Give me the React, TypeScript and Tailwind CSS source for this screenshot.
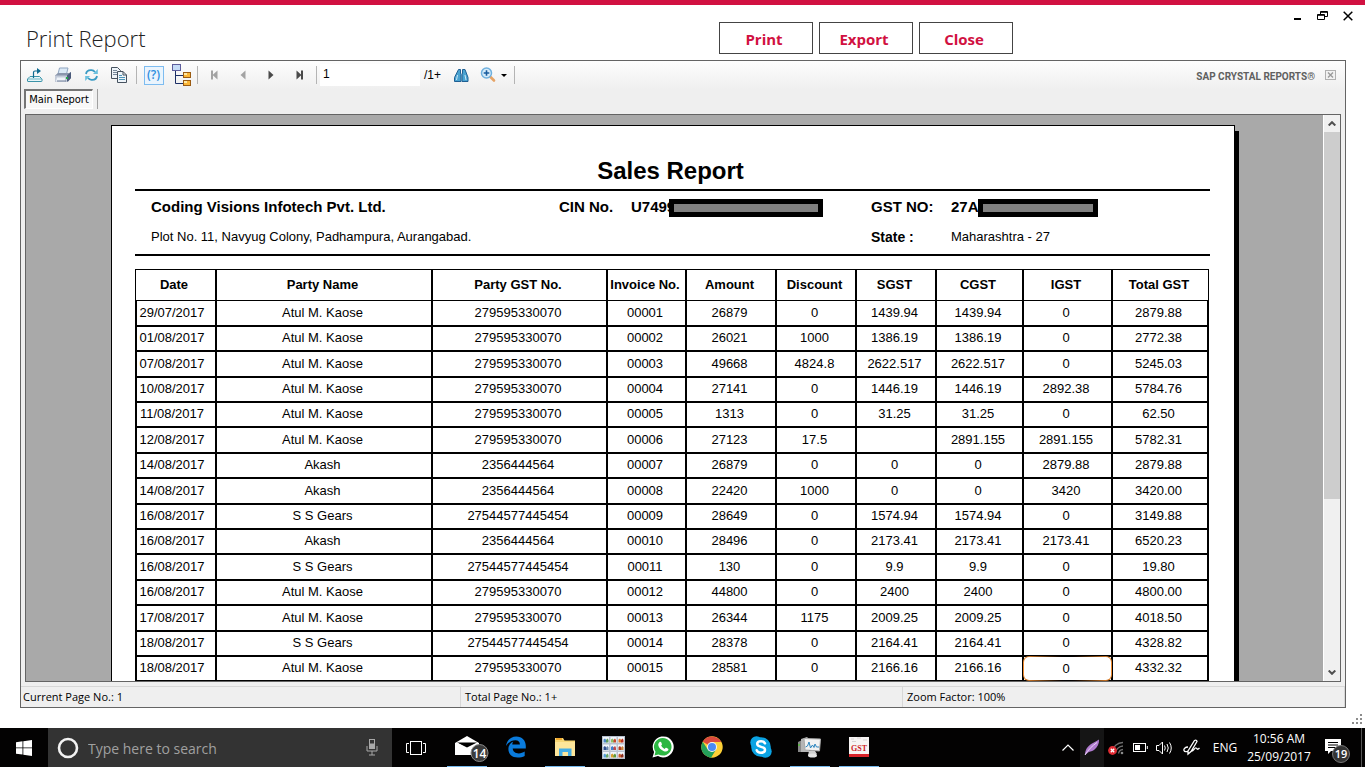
import React from "react";

type Row = string[];

const columns = [
  { label: "Date", width: "w-[82px]" },
  { label: "Party Name", width: "w-[216px]" },
  { label: "Party GST No.", width: "w-[175px]" },
  { label: "Invoice No.", width: "w-[79px]" },
  { label: "Amount", width: "w-[90px]" },
  { label: "Discount", width: "w-[80px]" },
  { label: "SGST", width: "w-[80px]" },
  { label: "CGST", width: "w-[87px]" },
  { label: "IGST", width: "w-[89px]" },
  { label: "Total GST", width: "w-[96px]" },
];

const rows: Row[] = [
  ["29/07/2017", "Atul M. Kaose", "279595330070", "00001", "26879", "0", "1439.94", "1439.94", "0", "2879.88"],
  ["01/08/2017", "Atul M. Kaose", "279595330070", "00002", "26021", "1000", "1386.19", "1386.19", "0", "2772.38"],
  ["07/08/2017", "Atul M. Kaose", "279595330070", "00003", "49668", "4824.8", "2622.517", "2622.517", "0", "5245.03"],
  ["10/08/2017", "Atul M. Kaose", "279595330070", "00004", "27141", "0", "1446.19", "1446.19", "2892.38", "5784.76"],
  ["11/08/2017", "Atul M. Kaose", "279595330070", "00005", "1313", "0", "31.25", "31.25", "0", "62.50"],
  ["12/08/2017", "Atul M. Kaose", "279595330070", "00006", "27123", "17.5", "", "2891.155", "2891.155", "5782.31"],
  ["14/08/2017", "Akash", "2356444564", "00007", "26879", "0", "0", "0", "2879.88", "2879.88"],
  ["14/08/2017", "Akash", "2356444564", "00008", "22420", "1000", "0", "0", "3420", "3420.00"],
  ["16/08/2017", "S S Gears", "27544577445454", "00009", "28649", "0", "1574.94", "1574.94", "0", "3149.88"],
  ["16/08/2017", "Akash", "2356444564", "00010", "28496", "0", "2173.41", "2173.41", "2173.41", "6520.23"],
  ["16/08/2017", "S S Gears", "27544577445454", "00011", "130", "0", "9.9", "9.9", "0", "19.80"],
  ["16/08/2017", "Atul M. Kaose", "279595330070", "00012", "44800", "0", "2400", "2400", "0", "4800.00"],
  ["17/08/2017", "Atul M. Kaose", "279595330070", "00013", "26344", "1175", "2009.25", "2009.25", "0", "4018.50"],
  ["18/08/2017", "S S Gears", "27544577445454", "00014", "28378", "0", "2164.41", "2164.41", "0", "4328.82"],
  ["18/08/2017", "Atul M. Kaose", "279595330070", "00015", "28581", "0", "2166.16", "2166.16", "0", "4332.32"],
];

function IconButton({ label, className = "w-7", children }: { label: string; className?: string; children: React.ReactNode }) {
  return (
    <button type="button" aria-label={label} className={`flex h-7 shrink-0 items-center justify-center ${className}`}>
      {children}
    </button>
  );
}

function Separator() {
  return (
    <div className="flex w-[7px] shrink-0 justify-center">
      <div className="h-[18px] w-px bg-[#b4b4b4]" />
    </div>
  );
}

function ExportIcon() {
  return (
    <svg width="18" height="16" viewBox="0 0 18 16" fill="none">
      <path d="M4 9.500L1.500 12v2q0 .5.500.5h13.500q.5 0 .5-.5v-2L13.500 9.500z" fill="#e8f5f8" stroke="#3b93a8" />
      <path d="M2 12h14" stroke="#6db5c4" />
      <path d="M7.500 11V5.500q0-1.500 1.500-1.500H12" stroke="#0e6a90" strokeWidth="1.200" />
      <path d="M11 1l4 3-4 3z" fill="#0e6a90" />
    </svg>
  );
}

function PrinterIcon() {
  return (
    <svg width="18" height="16" viewBox="0 0 18 16">
      <path d="M5.500 1h8.500l-1.500 6H4z" fill="#dbe9f6" stroke="#8fa5c0" />
      <path d="M1 8.500L4 6h11l2-1v6l-3 3.500H1z" fill="#8a96ac" />
      <path d="M1 8.500h12v6H1z" fill="#c3cbd9" />
      <path d="M3 10.500h8v4H2z" fill="#eef3f9" />
      <path d="M3 14h9" stroke="#6d7b94" />
      <path d="M13 8.500L17 5v6l-3 3.500h-1z" fill="#4a5a7a" />
      <path d="M12 10h2v2h-2z" fill="#26a84a" />
    </svg>
  );
}

function RefreshIcon() {
  return (
    <svg width="15" height="14" viewBox="0 0 15 14" fill="none" stroke="#3a9bc4" strokeWidth="1.800">
      <path d="M2 6C2.500 3 5 2 7.500 2.200c1.500.1 2.600.8 3.500 1.800" />
      <path d="M13 8c-.5 3-3 4-5.500 3.800C6 11.700 4.900 11 4 10" />
      <path d="M13.800 1v5H9z" fill="#6bc0de" stroke="none" />
      <path d="M1.200 13V8H6z" fill="#6bc0de" stroke="none" />
    </svg>
  );
}

function CopyIcon() {
  return (
    <svg width="18" height="18" viewBox="0 0 18 18" stroke="#46525f" fill="#eef4f9">
      <path d="M1.500 1.500h6l3 3v8h-9z" />
      <path d="M3 4.500h4M3 6.500h5M3 8.500h5" stroke="#77889a" />
      <path d="M7.500 5.500h5.500l3.500 3.500v7.500h-9z" />
      <path d="M13 5.500V9h3.500" fill="none" />
      <path d="M9 9.500h3M9 11.500h6M9 13.500h6" stroke="#4c96bb" />
    </svg>
  );
}

function TreeIcon() {
  return (
    <svg width="20" height="22" viewBox="0 0 20 22">
      <path d="M4.500 7v12.500H12M4.500 11.500H12" fill="none" stroke="#1c2f66" />
      <rect x="1.500" y=".5" width="8" height="6" fill="#c5dcf8" stroke="#5e5e9c" />
      <rect x="12.500" y="8.500" width="7" height="5" fill="#fbb636" stroke="#9a5b12" />
      <rect x="12.500" y="16.500" width="7" height="5" fill="#fbb636" stroke="#9a5b12" />
      <path d="M13 9h3v2h-3zM13 17h3v2h-3z" fill="#ffe7a3" />
    </svg>
  );
}

function NavIcon({ dir, bar, color }: { dir: "l" | "r"; bar: boolean; color: string }) {
  return (
    <svg width="8" height="10" viewBox="0 0 8 10" fill={color}>
      {dir === "l" ? <path d="M6.500.5v9L1.500 5z" /> : <path d="M1.500.5v9l5-4.500z" />}
      {bar && (dir === "l" ? <path d="M0 .5h2v9H0z" /> : <path d="M6 .5h2v9H6z" />)}
    </svg>
  );
}

function BinocularsIcon() {
  return (
    <svg width="15" height="13" viewBox="0 0 15 13" fill="#4aa3d1" stroke="#1f5f93">
      <path d="M4.500.5h2V4l.5 1.500v7H.5v-4z" />
      <path d="M10 .5H8.500V4L8 5.500v7h6v-4L11 .5z" />
      <path d="M3.500 6l-1 5M11 6l1 5" stroke="#cbe8f7" />
    </svg>
  );
}

function MagnifierIcon() {
  return (
    <svg width="16" height="16" viewBox="0 0 16 16" fill="none">
      <path d="M10.500 10l3.500 3.500" stroke="#e6a467" strokeWidth="2.600" strokeLinecap="round" />
      <circle cx="6.500" cy="6" r="5" fill="#d7ecfa" stroke="#6fb0de" strokeWidth="1.500" />
      <path d="M6.500 3.200v5.600M3.700 6h5.600" stroke="#1a5c9e" strokeWidth="1.600" />
    </svg>
  );
}

function Toolbar() {
  return (
    <div className="flex h-7 shrink-0 items-center bg-linear-to-b from-[#fdfdfd] to-[#efefef]">
      <IconButton label="Export report"><ExportIcon /></IconButton>
      <IconButton label="Print report"><PrinterIcon /></IconButton>
      <IconButton label="Refresh"><RefreshIcon /></IconButton>
      <IconButton label="Copy"><CopyIcon /></IconButton>
      <Separator />
      <IconButton label="Parameters" className="w-[27px]">
        <span className="flex h-[19px] w-5 items-center justify-center border border-[#7dbcf0] bg-[#eaf4fd] font-['Open_Sans',sans-serif] text-xs leading-none font-semibold text-[#2f8fe0]">
          (?)
        </span>
      </IconButton>
      <IconButton label="Group tree" className="w-[27px]"><TreeIcon /></IconButton>
      <Separator />
      <IconButton label="First page"><NavIcon dir="l" bar color="#a3a3a3" /></IconButton>
      <IconButton label="Previous page"><NavIcon dir="l" bar={false} color="#a3a3a3" /></IconButton>
      <IconButton label="Next page"><NavIcon dir="r" bar={false} color="#4a4a4a" /></IconButton>
      <IconButton label="Last page"><NavIcon dir="r" bar color="#4a4a4a" /></IconButton>
      <Separator />
      <input
        aria-label="Page number"
        defaultValue="1"
        className="h-[22px] w-[100px] bg-white px-[3px] pb-0.5 font-['Liberation_Sans',sans-serif] text-xs text-black outline-none"
      />
      <span className="ml-1 w-[23px] font-['Liberation_Sans',sans-serif] text-xs text-black">/1+</span>
      <IconButton label="Find text"><BinocularsIcon /></IconButton>
      <IconButton label="Zoom" className="w-9 gap-[5px]">
        <MagnifierIcon />
        <svg width="6" height="3" viewBox="0 0 6 3"><path d="M0 0h6L3 3z" /></svg>
      </IconButton>
      <Separator />
      <span className="ml-auto flex gap-px pt-0.5 font-['Roboto',sans-serif] text-[10px] font-bold text-[#606060]">
        SAP CRYSTAL REPORTS®
      </span>
      <button type="button" aria-label="Close view" className="mr-[9px] ml-[10px]">
        <svg width="11" height="10" viewBox="0 0 11 10" fill="none">
          <rect x=".5" y=".5" width="10" height="9" fill="#f2f2f2" stroke="#b0b0b0" />
          <path d="M3 2.500l5 5M8 2.500l-5 5" stroke="#9a9a9a" strokeWidth="1.400" />
        </svg>
      </button>
    </div>
  );
}

function Redaction({ className }: { className: string }) {
  return <span className={`h-[18px] shrink-0 border-5 border-black bg-[#808080] ${className}`} />;
}

function ReportPage() {
  return (
    <article className="mt-[10px] mr-[88px] ml-[85px] flex-1 self-start border border-black bg-white pt-8 pr-6 pb-10 pl-[23px] font-['Liberation_Sans',sans-serif] text-[13px] text-black shadow-[4px_6px_0_0_#000]">
      <h2 className="h-[31px] pr-1 text-center text-2xl leading-[26px] font-bold">Sales Report</h2>
      <section className="grid grid-cols-[408px_72px_240px_80px_1fr] grid-rows-[29px_29px] items-center border-y-2 border-black pt-0.5 pr-0 pb-[3px] pl-4">
        <strong className="text-[15px]">Coding Visions Infotech Pvt. Ltd.</strong>
        <strong className="text-[15px]">CIN No.</strong>
        <div className="flex items-center">
          <strong className="w-[38px] text-[15px]">U7499</strong>
          <Redaction className="w-[154px]" />
        </div>
        <strong className="text-[15px]">GST NO:</strong>
        <div className="flex items-center">
          <strong className="w-[27px] text-[15px]">27A</strong>
          <Redaction className="w-[120px]" />
        </div>
        <span className="col-span-3">Plot No. 11, Navyug Colony, Padhampura, Aurangabad.</span>
        <strong className="text-sm">State :</strong>
        <span>Maharashtra - 27</span>
      </section>
      <div className="pt-[13px] pr-px">
        <table className="w-full table-fixed border-separate border-spacing-0 text-center leading-4">
          <colgroup>
            {columns.map((c) => (
              <col key={c.label} className={c.width} />
            ))}
          </colgroup>
          <thead>
            <tr className="h-8">
              {columns.map((c) => (
                <th
                  key={c.label}
                  scope="col"
                  className="border-y border-r-2 border-black p-0 pr-[3px] font-bold whitespace-nowrap first:border-l last:border-r"
                >
                  {c.label}
                </th>
              ))}
            </tr>
          </thead>
          <tbody>
            {rows.map((row, r) => (
              <tr key={row[3]} className="h-[25px] nth-[5n+1]:h-[26px] nth-[5n+3]:h-[26px]">
                {row.map((cell, c) => (
                  <td key={c} className="relative border-r-2 border-b-2 border-black p-0 pr-[3px] pb-px whitespace-nowrap first:border-l-2 first:pr-2">
                    {r === 14 && c === 8 ? (
                      <span className="absolute -inset-px flex rounded-md bg-linear-to-r from-[#f08a2c] via-black to-[#f08a2c] p-px">
                        <span className="flex flex-1 items-center justify-center rounded-[5px] bg-white pr-[3px]">{cell}</span>
                      </span>
                    ) : (
                      cell
                    )}
                  </td>
                ))}
              </tr>
            ))}
          </tbody>
        </table>
      </div>
    </article>
  );
}

function Scrollbar() {
  return (
    <div className="flex w-[17px] shrink-0 flex-col border-l border-white bg-[#f0f0f0]">
      <button type="button" aria-label="Scroll up" className="flex h-[17px] items-center justify-center">
        <svg width="8" height="5" viewBox="0 0 8 5" fill="none" stroke="#505050" strokeWidth="2"><path d="M.7 4.500L4 1.200l3.300 3.300" /></svg>
      </button>
      <div className="flex-1">
        <div className="h-[69%] bg-[#cdcdcd]" />
      </div>
      <button type="button" aria-label="Scroll down" className="flex h-[17px] items-center justify-center">
        <svg width="8" height="5" viewBox="0 0 8 5" fill="none" stroke="#505050" strokeWidth="2"><path d="M.7.5L4 3.800 7.300.5" /></svg>
      </button>
    </div>
  );
}

function TaskItem({ label, active = false, children }: { label: string; active?: boolean; children: React.ReactNode }) {
  return (
    <button type="button" aria-label={label} className="flex w-[49px] flex-col items-center">
      <span className="flex flex-1 items-center">{children}</span>
      <span className={`h-px w-10 ${active ? "bg-[#76b9ed]" : ""}`} />
    </button>
  );
}

function MailIcon() {
  return (
    <svg width="34" height="28" viewBox="0 0 34 28">
      <path d="M0 9L12 2l12 7v12H0z" fill="#fff" />
      <path d="M2 8.500h20L12 13.500z" fill="#000" />
      <path d="M2 9l9 5.500" stroke="#fff" />
      <circle cx="24.500" cy="19" r="8.500" fill="#3c3c3c" stroke="#8a8a8a" />
      <text x="24.500" y="23.500" textAnchor="middle" fontFamily="Open Sans, sans-serif" fontSize="12" fontWeight="600" fill="#fff">14</text>
    </svg>
  );
}

function EdgeIcon() {
  return (
    <svg width="20" height="22" viewBox="0 0 20 22">
      <path
        d="M0 10C.8 4.500 4.500.5 10.300.5 16 .5 19.800 4.500 19.800 10v2.600H6.700c.2 3.200 2.800 4.800 6 4.800 2.300 0 4.200-.7 6-1.800v4.300c-2 1.200-4.500 1.700-7 1.700-5.700 0-9.300-3.300-9.300-8.500 0-3.500 1.800-6.200 4.900-7.700-.7 1-.9 1.900-1 3.200h7.600c0-2.700-1.400-4.400-4.600-4.400C5.600 4.200 2.300 6.400 0 10z"
        fill="#0a7bdc"
      />
    </svg>
  );
}

function FolderIcon() {
  return (
    <svg width="22" height="20" viewBox="0 0 22 20">
      <path d="M1 1h8l1.500 2.500H21V19H1z" fill="#f8d775" />
      <path d="M2 1h6v2H2z" fill="#f0a92e" />
      <path d="M1 5h20v14H1z" fill="#fee69a" />
      <path d="M5 11.500h12.500V19H14v-4H8.500v4H5z" fill="#45aee5" />
    </svg>
  );
}

function GalleryIcon() {
  const left = ["#4c86c6", "#8cc06a", "#e0752a", "#2f4f8f", "#3f7fd0", "#b0402a", "#5b9fd6", "#d8a02f", "#c8572a"];
  const right = ["#5c9a5c", "#c8452a", "#b83020", "#6a87b0", "#c04a4a", "#c8803a", "#6aa86a", "#5c9a3c", "#8a3020"];
  return (
    <svg width="23" height="23" viewBox="0 0 23 23">
      <rect width="23" height="23" fill="#b9c2d0" />
      {left.map((color, i) => (
        <g key={color} transform={`translate(${1 + (i % 3) * 7.5} ${1 + Math.floor(i / 3) * 7.5})`}>
          <rect width="6" height="6" fill="#f2f6fb" />
          <path d="M.5 5.500V2.500L2 1.500l1.500 2v2z" fill={color} />
          <path d="M3 5.500V3L4.500 1.500l1 1.500v2.500z" fill={right[i]} />
        </g>
      ))}
    </svg>
  );
}

function WhatsAppIcon() {
  return (
    <svg width="22" height="22" viewBox="0 0 22 22">
      <path d="M.5 21.500l1.600-5.400A10.500 10.500 0 1 1 6 20z" fill="#fff" />
      <path d="M2.500 19.500l1-3.700a8.800 8.800 0 1 1 3 2.700z" fill="#2cb742" />
      <path d="M7.600 6c.7-.6 1.400-.3 1.600.3l.7 1.600c.2.5-.1.900-.8 1.700.8 1.600 2 2.700 3.600 3.300.8-1 1-1.300 1.600-1.100l1.800.9c.5.300.3 1.300-.1 1.900-.9 1-2.300 1.300-4.100.6-3-1.100-5.200-3.600-5.600-5.900-.2-1.300.4-2.500 1.300-3.300z" fill="#fff" />
    </svg>
  );
}

function ChromeIcon() {
  return (
    <svg width="22" height="22" viewBox="0 0 22 22">
      <circle cx="11" cy="11" r="10.700" fill="#fdd037" />
      <path d="M11 11L1.700 5.700A10.700 10.700 0 0 1 20.300 6L11 6.200z" fill="#dc4a3d" />
      <path d="M1.700 5.700A10.700 10.700 0 0 0 10 21.650L15.200 13.400 11 11 6.600 13.300z" fill="#23a05a" />
      <path d="M20.300 6H11l4.200 7.400L10.200 21.680" fill="#fdd037" />
      <circle cx="11" cy="11" r="5" fill="#f4f4f4" />
      <circle cx="11" cy="11" r="4" fill="#4a8af4" />
    </svg>
  );
}

function SkypeIcon() {
  return (
    <svg width="22" height="22" viewBox="0 0 22 22">
      <circle cx="6.500" cy="6.500" r="6.200" fill="#0ba3e3" />
      <circle cx="15.500" cy="15.500" r="6.200" fill="#0ba3e3" />
      <circle cx="11" cy="11" r="9.800" fill="#0ba3e3" />
      <path d="M15 7.300c-.8-1.400-2.200-2-4-2-2.300 0-3.800 1-3.800 2.700 0 3.800 7.800 1.900 7.800 5.700 0 1.900-1.700 3-4.100 3-2.100 0-3.700-.8-4.200-2.500" fill="none" stroke="#fff" strokeWidth="2.500" strokeLinecap="round" />
    </svg>
  );
}

function MonitorIcon() {
  return (
    <svg width="23" height="22" viewBox="0 0 23 22">
      <path d="M0 6l4-2v12H0z" fill="#888" />
      <path d="M0 8h2v2H0z" fill="#5fb24a" />
      <path d="M3 3l6-2 2 2v13H3z" fill="#b5b5b5" />
      <path d="M6 2.500L22.500 3l-1 12L7 14z" fill="#f2f2f2" stroke="#aaa" />
      <path d="M7.500 11l2-1L11 6l1.500 6 2-3 1.500 2.500 1-3.500 1.500 3H21" fill="none" stroke="#2d86c0" />
      <path d="M11 15h6l2 3-3 2.500-6-1z" fill="#cfcfcf" />
      <ellipse cx="14.500" cy="19.500" rx="4.500" ry="2" fill="#e4e4e4" />
    </svg>
  );
}

function GstIcon() {
  return (
    <svg width="20" height="20" viewBox="0 0 20 20">
      <rect width="20" height="20" fill="#f7f4f4" />
      <path d="M0 17h20v3H0z" fill="#d8232a" />
      <path d="M2 2h3M8 1h4M14 3h4M3 4.500h4" stroke="#d9d4d4" />
      <text x="10" y="14" textAnchor="middle" fontFamily="Liberation Serif, serif" fontSize="8" fontWeight="700" fill="#cf1f28">GST</text>
    </svg>
  );
}

function Taskbar() {
  return (
    <footer className="flex h-[39px] shrink-0 bg-[#030202] font-['Open_Sans',sans-serif] text-white">
      <button type="button" aria-label="Start" className="flex w-12 items-center justify-center">
        <svg width="16" height="16" viewBox="0 0 16 16" fill="#fff">
          <path d="M0 2.200L6.500 1.300v6.200H0zM7.300 1.200L16 0v7.500H7.300zM0 8.300h6.500v6.300L0 13.700zM7.300 8.300H16V16l-8.700-1.200z" />
        </svg>
      </button>
      <label className="flex w-[344px] items-center bg-[#333333] pr-[14px] pl-2">
        <svg width="24" height="24" viewBox="0 0 24 24" fill="none"><circle cx="12" cy="12" r="9" stroke="#f2f2f2" strokeWidth="2.600" /></svg>
        <input
          aria-label="Search"
          placeholder="Type here to search"
          className="ml-2 min-w-0 flex-1 bg-transparent pt-0.5 text-sm outline-none placeholder:text-[#a0a0a0]"
        />
        <svg width="12" height="17" viewBox="0 0 12 17" fill="none" stroke="#a8a8a8">
          <rect x="3.500" y=".5" width="5" height="9" />
          <path d="M3.500 5h5v4.500h-5z" fill="#a8a8a8" />
          <path d="M1 7v5h10V7M6 12v4M3 16h6" />
        </svg>
      </label>
      <button type="button" aria-label="Task view" className="flex w-12 items-center justify-center">
        <svg width="20" height="14" viewBox="0 0 20 14" fill="none" stroke="#fff">
          <rect x="4.500" y=".5" width="11" height="13" />
          <path d="M3 2.500H.5v9H3M17 2.500h2.500v9H17" />
        </svg>
      </button>
      <nav className="flex pl-0.5" aria-label="Applications">
        <TaskItem label="Mail" active><span className="pt-0.5 pl-[10px]"><MailIcon /></span></TaskItem>
        <TaskItem label="Edge"><EdgeIcon /></TaskItem>
        <TaskItem label="File Explorer" active><FolderIcon /></TaskItem>
        <TaskItem label="Gallery"><GalleryIcon /></TaskItem>
        <TaskItem label="WhatsApp"><WhatsAppIcon /></TaskItem>
        <TaskItem label="Chrome"><ChromeIcon /></TaskItem>
        <TaskItem label="Skype"><SkypeIcon /></TaskItem>
        <TaskItem label="Monitor" active><MonitorIcon /></TaskItem>
        <TaskItem label="GST" active><GstIcon /></TaskItem>
      </nav>
      <div className="ml-auto flex items-stretch">
        <button type="button" aria-label="Show hidden icons" className="flex w-6 items-center justify-center">
          <svg width="12" height="7" viewBox="0 0 12 7" fill="none" stroke="#fff" strokeWidth="1.200"><path d="M.5 6.500L6 1l5.500 5.500" /></svg>
        </button>
        <button type="button" aria-label="Notes" className="flex w-6 items-center justify-center bg-[#151515]">
          <svg width="16" height="17" viewBox="0 0 16 17">
            <path d="M1 16C1 11 3.500 7 8 4.500 10.500 3 13 2 15 .5c.3 4-1.500 8-5 10.500-2.500 1.500-5 1.500-6.500 3z" fill="#b07bd0" />
            <path d="M1 16C4 11 8 7 13 3.500" fill="none" stroke="#ead8f5" />
          </svg>
        </button>
        <button type="button" aria-label="Network" className="flex w-6 items-center justify-center">
          <svg width="16" height="14" viewBox="0 0 16 14" fill="none" stroke="#6e6e6e" strokeWidth="1.300">
            <path d="M4 11A11 11 0 0 1 15 1.500M7.500 12A8 8 0 0 1 15 5M10.500 12.500A5 5 0 0 1 15 8.500" />
            <circle cx="14" cy="12" r="1.300" fill="#8c8c8c" stroke="none" />
            <circle cx="4.500" cy="9.500" r="4.400" fill="#e02a32" stroke="none" />
            <path d="M2.800 7.800l3.400 3.400M6.200 7.800l-3.400 3.400" stroke="#fff" />
          </svg>
        </button>
        <button type="button" aria-label="Battery" className="flex w-6 items-center justify-center">
          <svg width="15" height="9" viewBox="0 0 15 9" fill="none" stroke="#fff"><rect x=".5" y=".5" width="12" height="8" /><path d="M2 2h5v5H2z" fill="#fff" stroke="none" /><path d="M14.300 3v3" /></svg>
        </button>
        <button type="button" aria-label="Volume" className="flex w-6 items-center justify-center">
          <svg width="17" height="14" viewBox="0 0 17 14" fill="none" stroke="#fff">
            <path d="M.5 4.500H3L6.500 1v12L3 9.500H.5zM8.500 4.500q1.500 2.500 0 5M11 3q2.500 4 0 8M13.500 1.500q3.500 5.500 0 11" />
          </svg>
        </button>
        <button type="button" aria-label="Ink workspace" className="flex w-[30px] items-center justify-center">
          <svg width="17" height="17" viewBox="0 0 17 17" fill="none" stroke="#fff" strokeWidth="1.300">
            <path d="M5 12L11.500 1.500q2-1 2.500 1L8 12.500 5 15zM5 8C2 8 .5 10 1 11.500S4 13 5 12M8.500 12c2 .5 3-3.500 4.500-3s1 2.500 3.500 0" />
          </svg>
        </button>
        <span className="flex w-[38px] items-center justify-center text-xs">ENG</span>
        <div className="flex w-[70px] flex-col items-center justify-center text-xs leading-[18px]">
          <span>10:56 AM</span>
          <span>25/09/2017</span>
        </div>
        <button type="button" aria-label="Notifications" className="flex w-12 items-center justify-center border-r border-[#555] pt-1">
          <svg width="26" height="26" viewBox="0 0 26 26">
            <path d="M0 2h16v12H6l-3 3v-3H0z" fill="#fff" />
            <path d="M3 5.500h10M3 8h10M3 10.500h7" stroke="#000" />
            <circle cx="16" cy="17" r="8.500" fill="#333" stroke="#777" />
            <text x="16" y="21" textAnchor="middle" fontFamily="Open Sans, sans-serif" fontSize="11" fontWeight="600" fill="#fff">19</text>
          </svg>
        </button>
        <div className="w-[3px]" />
      </div>
    </footer>
  );
}

export default function App() {
  return (
    <div className="flex h-screen flex-col overflow-hidden bg-white">
      <header className="flex h-[60px] shrink-0 border-t-5 border-[#d11141] font-['Open_Sans',sans-serif]">
        <h1 className="pt-[15px] pl-[26px] text-[22px] leading-9 font-light text-[#222]">Print Report</h1>
        <div className="ml-auto flex gap-[6px] pt-[17px]">
          {["Print", "Export", "Close"].map((label) => (
            <button key={label} type="button" className="h-8 w-[94px] border border-[#444] pt-0.5 pr-1 text-[15px] leading-5 font-bold text-[#d11141]">
              {label}
            </button>
          ))}
        </div>
        <div className="flex w-[352px] items-start justify-end gap-[15px] pt-[6px] pr-3">
          <button type="button" aria-label="Minimize">
            <svg width="10" height="10" viewBox="0 0 10 10"><path d="M2 7h7v2H2z" /></svg>
          </button>
          <button type="button" aria-label="Restore">
            <svg width="11" height="10" viewBox="0 0 11 10" fill="none" stroke="#000">
              <path d="M3.500 3V.5h7v5H8M3.500 1.300h7M.5 3.500h7v5h-7zM.5 4.300h7" />
            </svg>
          </button>
          <button type="button" aria-label="Close window">
            <svg width="10" height="10" viewBox="0 0 10 10" fill="none" stroke="#000" strokeWidth="1.500"><path d="M.7.7l8.600 8.600M9.300.7L.7 9.300" /></svg>
          </button>
        </div>
      </header>

      <main className="mr-[19px] ml-5 flex min-h-0 flex-1 flex-col border border-[#646464] bg-[#efefef] text-[11px] text-black">
        <Toolbar />
        <div className="flex h-[25px] shrink-0 items-start pl-[3px]">
          <button type="button" className="h-5 w-[69px] border-t-2 border-r border-b border-l-2 border-t-[#757575] border-r-white border-b-white border-l-[#757575] bg-[#f8f8f8] pt-px text-center font-['DejaVu_Sans_Condensed','DejaVu_Sans',sans-serif] leading-4 whitespace-nowrap">
            Main Report
          </button>
          <div className="ml-1 h-5 w-px bg-[#a0a0a0]" />
        </div>
        <div className="mx-1 flex min-h-0 flex-1 overflow-hidden border border-[#646464] bg-[#a9a9a9]">
          <ReportPage />
          <Scrollbar />
        </div>
        <div className="mt-1 flex h-[21px] shrink-0 border-t border-[#d7d7d7] font-['Open_Sans',sans-serif] leading-5">
          <span className="flex-1 border-r border-[#d7d7d7] pl-0.5">Current Page No.: 1</span>
          <span className="flex-1 border-r border-[#d7d7d7] pl-1">Total Page No.: 1+</span>
          <span className="flex-1 border-r border-[#d7d7d7] pl-1">Zoom Factor: 100%</span>
        </div>
      </main>

      <div className="flex h-5 shrink-0 items-end justify-end pr-[3px] pb-1">
        <svg width="10" height="10" viewBox="0 0 10 10" fill="#8c8c8c">
          <path d="M8 0h2v2H8zM4 4h2v2H4zM8 4h2v2H8zM0 8h2v2H0zM4 8h2v2H4zM8 8h2v2H8z" />
        </svg>
      </div>
      <Taskbar />
    </div>
  );
}
